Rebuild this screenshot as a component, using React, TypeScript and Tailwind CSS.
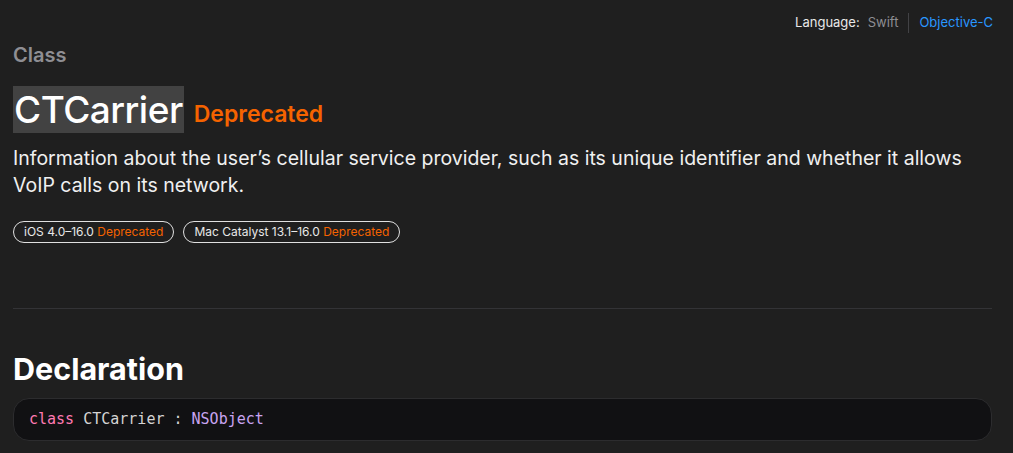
export default function App() {
  return (
    <div
      className="min-h-[453px] w-full bg-[#1f1f1f] text-white pl-[13px] pr-[21px] overflow-hidden"
      style={{ fontFamily: 'Inter, "Noto Sans", sans-serif' }}
    >
      <div className="flex justify-end items-center pt-[13px] text-[13px] h-[32px] mr-[-1px]">
        <span className="text-[#e8e8e8]">Language:</span>
        <span className="text-[#8e8e93] ml-[8px]">Swift</span>
        <span className="w-px h-[20px] bg-[#424245] mx-[10px]" />
        <span className="text-[#2997ff]">Objective-C</span>
      </div>

      <div className="text-[20px] font-semibold text-[#8e8e93] mt-[9px] leading-[28px]">Class</div>

      <div className="flex items-end mt-[17px]">
        <h1 className="text-[37px] leading-[47px] font-medium bg-[#424242] px-[1px] tracking-[-0.5px]">
          CTCarrier
        </h1>
        <span className="text-[23px] font-semibold text-[#f56300] ml-[10px] mb-[3px] leading-[32px]">
          Deprecated
        </span>
      </div>

      <p className="text-[19.5px] leading-[27px] mt-[12px] text-[#f0f0f0] max-w-[980px]">
        Information about the user’s cellular service provider, such as its unique identifier and whether it allows
        VoIP calls on its network.
      </p>

      <div className="flex gap-[9px] mt-[22px]">
        <span className="border border-[#e0e0e0] rounded-full px-[10px] h-[22px] flex items-center text-[12px] text-[#e8e8e8]">
          iOS 4.0–16.0&nbsp;<span className="text-[#f56300]">Deprecated</span>
        </span>
        <span className="border border-[#e0e0e0] rounded-full px-[10px] h-[22px] flex items-center text-[12px] text-[#e8e8e8]">
          Mac Catalyst 13.1–16.0&nbsp;<span className="text-[#f56300]">Deprecated</span>
        </span>
      </div>

      <div className="h-px bg-[#333336] mt-[65px]" />

      <h2 className="text-[30.5px] font-bold leading-[40px] mt-[40px]">Declaration</h2>

      <div
        className="mt-[9px] bg-[#111113] border border-[#2c2c2e] rounded-[16px] h-[43px] flex items-center px-[15px] text-[15px] text-[#d4d4d4]"
        style={{ fontFamily: '"DejaVu Sans Mono", "Liberation Mono", monospace' }}
      >
        <span className="text-[#ff7ab2]">class</span>
        <span>&nbsp;CTCarrier :&nbsp;</span>
        <span className="text-[#c8a4f0]">NSObject</span>
      </div>
    </div>
  )
}
